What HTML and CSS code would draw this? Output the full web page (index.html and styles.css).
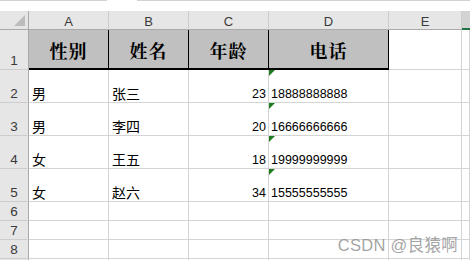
FILE: index.html
```html
<!DOCTYPE html>
<html>
<head>
<meta charset="utf-8">
<link rel="stylesheet" href="styles.css">
</head>
<body>
<div class="page">
  <div class="strip"><span class="bar bar-a"></span><span class="bar bar-b"></span></div>
  <div class="sheet">
    <div class="corner"><span class="tri"></span></div>
    <div class="colh">A</div>
    <div class="colh">B</div>
    <div class="colh">C</div>
    <div class="colh">D</div>
    <div class="colh">E</div>
    <div class="colh sel"></div>

    <div class="rowh">1</div>
    <div class="cell head">性别</div>
    <div class="cell head">姓名</div>
    <div class="cell head">年龄</div>
    <div class="cell head">电话</div>
    <div class="cell"></div>
    <div class="cell"></div>

    <div class="rowh">2</div>
    <div class="cell cjk">男</div>
    <div class="cell cjk">张三</div>
    <div class="cell num">23</div>
    <div class="cell txt">18888888888</div>
    <div class="cell"></div>
    <div class="cell"></div>

    <div class="rowh">3</div>
    <div class="cell cjk">男</div>
    <div class="cell cjk">李四</div>
    <div class="cell num">20</div>
    <div class="cell txt">16666666666</div>
    <div class="cell"></div>
    <div class="cell"></div>

    <div class="rowh">4</div>
    <div class="cell cjk">女</div>
    <div class="cell cjk">王五</div>
    <div class="cell num">18</div>
    <div class="cell txt">19999999999</div>
    <div class="cell"></div>
    <div class="cell"></div>

    <div class="rowh">5</div>
    <div class="cell cjk">女</div>
    <div class="cell cjk">赵六</div>
    <div class="cell num">34</div>
    <div class="cell txt">15555555555</div>
    <div class="cell"></div>
    <div class="cell"></div>

    <div class="rowh">6</div>
    <div class="cell"></div><div class="cell"></div><div class="cell"></div><div class="cell"></div><div class="cell"></div><div class="cell"></div>

    <div class="rowh">7</div>
    <div class="cell"></div><div class="cell"></div><div class="cell"></div><div class="cell"></div><div class="cell"></div><div class="cell"></div>

    <div class="rowh">8</div>
    <div class="cell"></div><div class="cell"></div><div class="cell"></div><div class="cell"></div><div class="cell"></div><div class="cell"></div>

    <div class="rowh"></div>
    <div class="cell"></div><div class="cell"></div><div class="cell"></div><div class="cell"></div><div class="cell"></div><div class="cell"></div>
  </div>
  <div class="watermark">CSDN @良猿啊</div>
</div>
</body>
</html>
```
FILE: styles.css
```css
* { box-sizing: border-box; }
html, body { margin: 0; padding: 0; background: #fff; }
body { width: 470px; height: 260px; overflow: hidden; font-family: "Liberation Sans", "Noto Sans CJK SC", sans-serif; }
.page { position: relative; width: 470px; height: 260px; overflow: hidden; }

.strip { height: 11px; display: flex; align-items: flex-start; background: #fff; }
.bar { height: 1px; background: #d2d2d2; }
.bar-a { width: 107px; }
.bar-b { flex: 1; margin-left: 30px; }

.sheet {
  display: grid;
  grid-template-columns: 29px 80px 80px 80px 120px 73px 1fr;
  grid-template-rows: 19px 40px 33px 33px 33px 33px 19px 19px 19px 19px;
}

.corner {
  background: #e6e6e6;
  border-right: 1px solid #a9a9a9;
  border-bottom: 1px solid #a9a9a9;
  display: flex;
  align-items: flex-end;
  justify-content: flex-end;
  padding: 0 3px 3px 0;
}
.tri {
  width: 0; height: 0;
  border-left: 11px solid transparent;
  border-bottom: 11px solid #bcbcbc;
}

.colh {
  background: #e6e6e6;
  border-right: 1px solid #cdcdcd;
  border-bottom: 1px solid #a9a9a9;
  display: flex;
  align-items: center;
  justify-content: center;
  padding-top: 2px;
  font-size: 13px;
  color: #3a3a3a;
}
.colh.sel { background: #d3d3d3; border-bottom: 2px solid #217346; border-right: none; }

.rowh {
  background: #e6e6e6;
  border-right: 1px solid #a9a9a9;
  border-bottom: 1px solid #cdcdcd;
  display: flex;
  align-items: flex-end;
  justify-content: center;
  font-size: 13.5px;
  line-height: 15px;
  padding-bottom: 1px;
  color: #3a3a3a;
}

.cell {
  position: relative;
  border-right: 1px solid #d4d4d4;
  border-bottom: 1px solid #d4d4d4;
  display: flex;
  align-items: flex-end;
  font-size: 12.5px;
  line-height: 16px;
  color: #000;
  white-space: nowrap;
}

.head {
  background: #c0c0c0;
  border-right: 1px solid #000;
  border-bottom: 2px solid #000;
  align-items: center;
  justify-content: center;
  font-family: "Noto Serif CJK SC", "Noto Sans CJK SC", serif;
  font-weight: 700;
  font-size: 18px;
  line-height: 22px;
  letter-spacing: 1px;
  padding-top: 1px;
}

.cjk {
  font-family: "Noto Sans CJK SC", sans-serif;
  font-size: 14px;
  padding-left: 3px;
  padding-bottom: 1px;
}

.num { justify-content: flex-end; padding-right: 2px; }

.txt { padding-left: 2px; }
.txt::before {
  content: "";
  position: absolute;
  left: 0;
  top: 0;
  width: 0; height: 0;
  border-top: 6px solid #1f7d1f;
  border-right: 6px solid transparent;
}

.watermark {
  position: absolute;
  right: 12px;
  top: 232px;
  font-family: "Liberation Sans", "Noto Sans CJK SC", sans-serif;
  font-size: 16.5px;
  color: rgba(140, 140, 140, 0.8);
  letter-spacing: 0.3px;
}
```
